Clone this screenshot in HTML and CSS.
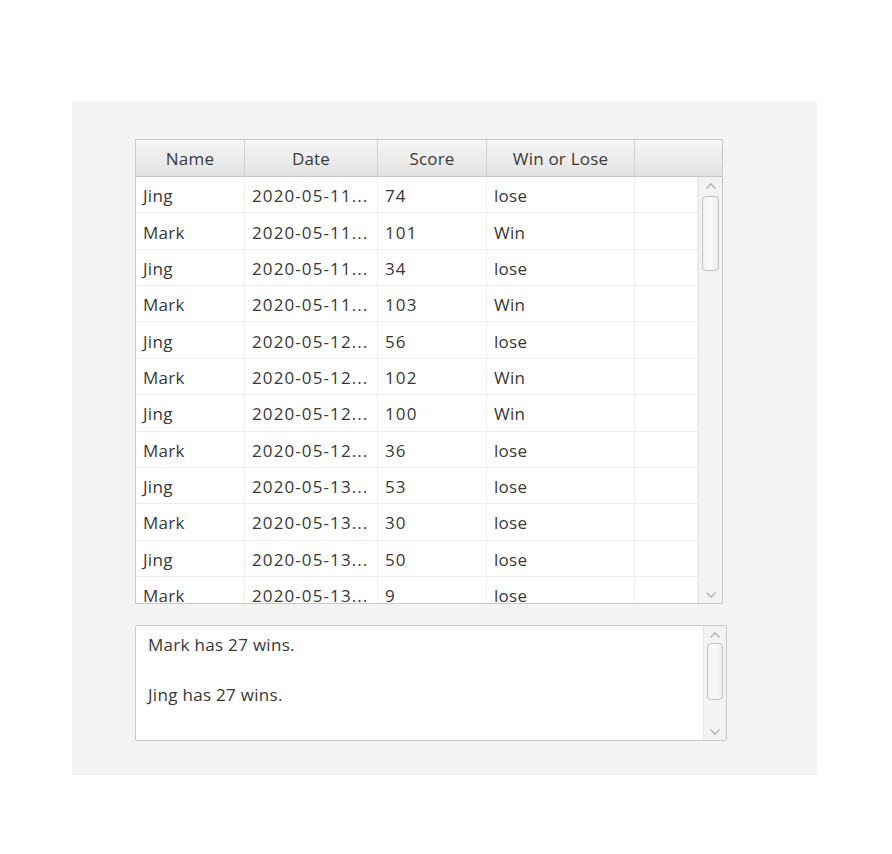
FILE: index.html
```html
<!DOCTYPE html>
<html>
<head>
<meta charset="utf-8">
<link rel="stylesheet" href="styles.css">
</head>
<body>
<div class="panel">
  <div class="table">
    <div class="thead">
      <div class="th">Name</div>
      <div class="th">Date</div>
      <div class="th">Score</div>
      <div class="th">Win or Lose</div>
      <div class="th filler"></div>
    </div>
    <div class="tbody">
      <div class="rows">
        <div class="tr"><div class="td">Jing</div><div class="td num">2020-05-11...</div><div class="td num">74</div><div class="td">lose</div><div class="td"></div></div>
        <div class="tr"><div class="td">Mark</div><div class="td num">2020-05-11...</div><div class="td num">101</div><div class="td">Win</div><div class="td"></div></div>
        <div class="tr"><div class="td">Jing</div><div class="td num">2020-05-11...</div><div class="td num">34</div><div class="td">lose</div><div class="td"></div></div>
        <div class="tr"><div class="td">Mark</div><div class="td num">2020-05-11...</div><div class="td num">103</div><div class="td">Win</div><div class="td"></div></div>
        <div class="tr"><div class="td">Jing</div><div class="td num">2020-05-12...</div><div class="td num">56</div><div class="td">lose</div><div class="td"></div></div>
        <div class="tr"><div class="td">Mark</div><div class="td num">2020-05-12...</div><div class="td num">102</div><div class="td">Win</div><div class="td"></div></div>
        <div class="tr"><div class="td">Jing</div><div class="td num">2020-05-12...</div><div class="td num">100</div><div class="td">Win</div><div class="td"></div></div>
        <div class="tr"><div class="td">Mark</div><div class="td num">2020-05-12...</div><div class="td num">36</div><div class="td">lose</div><div class="td"></div></div>
        <div class="tr"><div class="td">Jing</div><div class="td num">2020-05-13...</div><div class="td num">53</div><div class="td">lose</div><div class="td"></div></div>
        <div class="tr"><div class="td">Mark</div><div class="td num">2020-05-13...</div><div class="td num">30</div><div class="td">lose</div><div class="td"></div></div>
        <div class="tr"><div class="td">Jing</div><div class="td num">2020-05-13...</div><div class="td num">50</div><div class="td">lose</div><div class="td"></div></div>
        <div class="tr"><div class="td">Mark</div><div class="td num">2020-05-13...</div><div class="td num">9</div><div class="td">lose</div><div class="td"></div></div>
      </div>
      <div class="vscroll">
        <svg class="arrow" width="12" height="8" viewBox="0 0 12 8"><path d="M1.5 6.5 L6 2 L10.5 6.5" fill="none" stroke="#b0b0b0" stroke-width="1.3"/></svg>
        <div class="track"><div class="thumb thumb-table"></div></div>
        <svg class="arrow" width="12" height="8" viewBox="0 0 12 8"><path d="M1.5 1.5 L6 6 L10.5 1.5" fill="none" stroke="#b0b0b0" stroke-width="1.3"/></svg>
      </div>
    </div>
  </div>
  <div class="textarea">
    <div class="text">Mark has 27 wins.<br><br>Jing has 27 wins.</div>
    <div class="vscroll vscroll-ta">
      <svg class="arrow" width="12" height="8" viewBox="0 0 12 8"><path d="M1.5 6.5 L6 2 L10.5 6.5" fill="none" stroke="#b0b0b0" stroke-width="1.3"/></svg>
      <div class="track"><div class="thumb thumb-ta"></div></div>
      <svg class="arrow" width="12" height="8" viewBox="0 0 12 8"><path d="M1.5 1.5 L6 6 L10.5 1.5" fill="none" stroke="#b0b0b0" stroke-width="1.3"/></svg>
    </div>
  </div>
</div>
</body>
</html>
```
FILE: styles.css
```css
* { box-sizing: border-box; }
body {
  margin: 0;
  background: #ffffff;
  font-family: "Open Sans", "Liberation Sans", sans-serif;
  font-size: 17px;
  color: #383838;
}
.panel {
  margin: 102px 0 0 72px;
  width: 745px;
  height: 673px;
  background: #f4f4f4;
  padding: 37px 0 0 63px;
  display: flex;
  flex-direction: column;
  gap: 21px;
}
.table {
  width: 588px;
  height: 465px;
  border: 1px solid #c9c9c9;
  background: #ffffff;
  display: flex;
  flex-direction: column;
}
.thead {
  height: 37px;
  flex: none;
  display: grid;
  grid-template-columns: 109px 133px 109px 148px 1fr;
  background: linear-gradient(#f7f7f7, #e2e2e2);
  border-bottom: 1px solid #c6c6c6;
}
.th {
  display: flex;
  align-items: center;
  justify-content: center;
  padding-top: 0;
  border-right: 1px solid #cfcfcf;
  color: #3a3a3a;
  letter-spacing: 0.2px;
}
.th.filler { border-right: none; }
.tbody {
  flex: 1;
  display: flex;
  min-height: 0;
}
.rows {
  flex: 1;
  overflow: hidden;
}
.tr {
  display: grid;
  grid-template-columns: 109px 133px 109px 148px 1fr;
  height: 36.36px;
  border-bottom: 1px solid #efefef;
}
.td {
  display: flex;
  align-items: center;
  padding: 2px 0 0 7px;
  border-right: 1px solid #efefef;
  white-space: nowrap;
  letter-spacing: 0.3px;
}
.td.num { letter-spacing: 1.1px; }
.vscroll {
  width: 24px;
  flex: none;
  background: #f3f3f3;
  border-left: 1px solid #e6e6e6;
  display: flex;
  flex-direction: column;
  align-items: center;
}
.arrow { flex: none; margin: 5px 0 4px; }
.track {
  flex: 1;
  width: 100%;
  padding: 0 3px;
}
.thumb {
  width: 100%;
  border: 1px solid #c4c4c4;
  border-radius: 4px;
  background: linear-gradient(to right, #f2f2f2, #fafafa 50%, #ececec);
}
.thumb-table { height: 75px; margin-top: 2px; }
.textarea {
  width: 592px;
  height: 116px;
  border: 1px solid #c9c9c9;
  border-radius: 2px;
  background: #ffffff;
  display: flex;
}
.text {
  flex: 1;
  padding: 6px 0 0 12px;
  line-height: 25px;
  letter-spacing: 0.3px;
}
.vscroll-ta { width: 23px; }
.thumb-ta { height: 57px; margin-top: 0; }
```
